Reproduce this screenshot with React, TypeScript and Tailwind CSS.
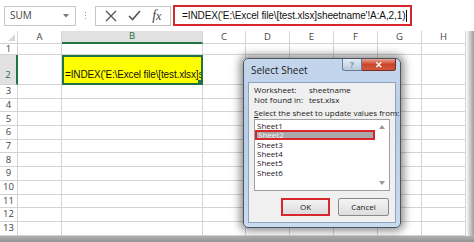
import React from "react";

const cols = ["A", "B", "C", "D", "E", "F", "G", "H"];
const rows = [1, 2, 3, 4, 5, 6, 7, 8, 9, 10, 11, 12, 13];
const formula = "=INDEX('E:\\Excel file\\[test.xlsx]sheetname'!A:A,2,1)";

function Toolbar() {
  return (
    <div className="flex h-[31px] items-center bg-white pl-[4px]">
      <div className="flex h-[20px] w-[72px] items-center justify-between border border-[#c6c6c6] pl-[5px] pr-[6px] text-[10px] text-[#444]">
        <span>SUM</span>
        <svg width="6" height="4" viewBox="0 0 6 4">
          <path d="M0 0 L6 0 L3 3.5 Z" fill="#777" />
        </svg>
      </div>
      <div className="flex w-[19px] flex-col items-center gap-[2px]">
        <span className="h-[1px] w-[1px] bg-[#999]" />
        <span className="h-[1px] w-[1px] bg-[#999]" />
        <span className="h-[1px] w-[1px] bg-[#999]" />
      </div>
      <div className="flex h-[20px] w-[76px] items-center justify-around border border-[#c6c6c6] px-[3px]">
        <svg width="12" height="12" viewBox="0 0 12 12">
          <path d="M1 1 L11 11 M11 1 L1 11" stroke="#555" strokeWidth="1.3" />
        </svg>
        <svg width="13" height="11" viewBox="0 0 13 11">
          <path d="M1 6 L4.5 9.5 L12 1" stroke="#555" strokeWidth="1.6" fill="none" />
        </svg>
        <span className="font-['Liberation_Serif',serif] text-[14px] italic text-[#444]">
          f<span className="text-[12px]">x</span>
        </span>
      </div>
      <div className="ml-[2px] flex h-[21px] w-[239px] items-center overflow-hidden whitespace-nowrap border-2 border-[#d8262e] pl-[7px] font-['Liberation_Sans',sans-serif] text-[10px] tracking-[-0.1px] text-[#111]">
        <span>{formula}</span>
        <span className="ml-[1px] h-[12px] w-[1px] shrink-0 bg-[#111]" />
      </div>
    </div>
  );
}

function Sheet() {
  return (
    <div className="grid grid-cols-[18px_44px_141px_43px_44px_44px_44px_44px_44px] grid-rows-[13px_11px_30px_repeat(11,13.7px)] text-[9.5px] text-[#444]">
      <div className="relative border-r border-b border-[#d4d4d4] bg-white">
        <svg className="absolute right-[2px] bottom-[2px]" width="7" height="7" viewBox="0 0 7 7">
          <path d="M7 0 L7 7 L0 7 Z" fill="#d8d8d8" />
        </svg>
      </div>
      {cols.map((c) =>
        c === "B" ? (
          <div
            key={c}
            className="flex items-center justify-center border-r border-b-2 border-r-[#d4d4d4] border-b-[#217346] bg-[#e1e1e1] text-[#217346]"
          >
            {c}
          </div>
        ) : (
          <div key={c} className="flex items-center justify-center border-r border-b border-[#d4d4d4]">
            {c}
          </div>
        ),
      )}
      {rows.map((r) => (
        <React.Fragment key={r}>
          {r === 2 ? (
            <div className="flex items-end justify-center border-r-2 border-b border-r-[#217346] border-b-[#d4d4d4] bg-[#e1e1e1] pb-[2px] text-[#217346]">
              {r}
            </div>
          ) : (
            <div className="flex items-center justify-center border-r border-b border-[#d4d4d4]">{r}</div>
          )}
          {cols.map((c) =>
            c === "B" && r === 2 ? (
              <div
                key={c}
                className="relative flex items-end overflow-hidden whitespace-nowrap border-2 border-[#217346] bg-[#ffff00] pb-[1px] pl-[1px] font-['Liberation_Sans',sans-serif] text-[10px] tracking-[-0.15px] text-[#111]"
              >
                {formula}
                <span className="absolute right-[-1px] bottom-[-1px] h-[4px] w-[4px] bg-[#217346]" />
              </div>
            ) : (
              <div key={c} className="border-r border-b border-[#d4d4d4]" />
            ),
          )}
        </React.Fragment>
      ))}
    </div>
  );
}

function Dialog() {
  return (
    <div className="absolute top-[58px] left-[243px] flex h-[170px] w-[158px] flex-col rounded-[5px] border border-[#4b5562] bg-[linear-gradient(180deg,#c4d6ec_0%,#b8cde6_40%,#c9dbef_100%)] px-[4px] pb-[4px] shadow-[0_0_8px_3px_rgba(0,0,0,0.45)]">
      <div className="flex h-[23px] items-start justify-between">
        <span className="pt-[5px] pl-[3px] text-[10px] leading-[12px] text-[#1a1a1a]">Select Sheet</span>
        <div className="flex">
          <div className="flex h-[12px] w-[20px] items-center justify-center rounded-bl-[3px] border border-t-0 border-[#6a7b92] bg-[linear-gradient(180deg,#e4ecf6,#b9cade)] text-[8px] leading-[8px] font-bold text-[#7a8aa0]">
            ?
          </div>
          <div className="flex h-[12px] w-[34px] items-center justify-center rounded-br-[3px] border border-t-0 border-l-0 border-[#7a2a20] bg-[linear-gradient(180deg,#e8a493,#c8452b_50%,#d15a3c)] text-[9px] leading-[9px] font-bold text-white">
            ✕
          </div>
        </div>
      </div>
      <div className="flex flex-1 flex-col border border-[#8da2bc] bg-[#f0f0f0] px-[5px] pt-[2px] text-[8px] leading-[9.5px] text-[#1a1a1a]">
        <div className="flex">
          <span className="w-[55px]">Worksheet:</span>
          <span>sheetname</span>
        </div>
        <div className="flex">
          <span className="w-[55px]">Not found in:</span>
          <span>test.xlsx</span>
        </div>
        <div className="mt-[4px] whitespace-nowrap">
          <span className="underline">S</span>elect the sheet to update values from:
        </div>
        <div className="mt-[1px] flex h-[72px] border border-[#a0a0a0] bg-white">
          <div className="flex flex-1 flex-col pt-[1px] leading-[9.3px]">
            <span className="h-[9.3px] pl-[2px]">Sheet1</span>
            <span className="flex h-[10px] items-center border-2 border-[#d8262e] bg-[#a9a9a9] pl-[1px] leading-[8px] text-[#f0f0f0]">
              Sheet2
            </span>
            <span className="h-[9.3px] pl-[2px]">Sheet3</span>
            <span className="h-[9.3px] pl-[2px]">Sheet4</span>
            <span className="h-[9.3px] pl-[2px]">Sheet5</span>
            <span className="h-[9.3px] pl-[2px]">Sheet6</span>
          </div>
          <div className="flex w-[14px] flex-col items-center justify-between py-[5px]">
            <svg width="6" height="4" viewBox="0 0 6 4">
              <path d="M0 4 L3 0 L6 4 Z" fill="#9a9a9a" />
            </svg>
            <svg width="6" height="4" viewBox="0 0 6 4">
              <path d="M0 0 L6 0 L3 4 Z" fill="#9a9a9a" />
            </svg>
          </div>
        </div>
        <div className="mt-[7px] flex justify-end gap-[8px] pr-[1px]">
          <div className="flex h-[18px] w-[49px] items-center justify-center border-2 border-[#d8262e] bg-[linear-gradient(180deg,#f2f2f2,#dcdcdc)]">
            OK
          </div>
          <div className="flex h-[18px] w-[51px] items-center justify-center rounded-[2px] border border-[#8a8a8a] bg-[linear-gradient(180deg,#f4f4f4,#dddddd)]">
            Cancel
          </div>
        </div>
      </div>
    </div>
  );
}

export default function App() {
  return (
    <div className="relative h-[242px] w-[474px] overflow-hidden bg-white font-['Open_Sans',sans-serif]">
      <Toolbar />
      <div className="flex">
        <Sheet />
        <div className="w-[8px] bg-[linear-gradient(90deg,#ffffff,#9c9c9c)]" />
      </div>
      <div className="h-[7px] bg-[linear-gradient(180deg,#b0b0b0,#8e8e8e)]" />
      <Dialog />
    </div>
  );
}
